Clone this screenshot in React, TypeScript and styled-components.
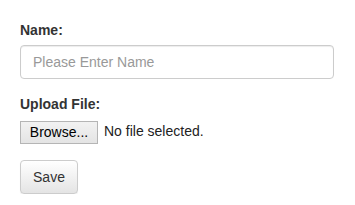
import React from 'react';
import styled, { createGlobalStyle } from 'styled-components';

const GlobalStyle = createGlobalStyle`
  html, body {
    margin: 0;
    padding: 0;
    background: #fff;
  }
  body {
    font-family: "Liberation Sans", Arial, sans-serif;
    font-size: 14px;
    line-height: 1.42857;
    color: #333;
  }
  * {
    box-sizing: border-box;
  }
`

const Form = styled.form`
  padding: 20px 21px 0 20px;
  display: flex;
  flex-direction: column;
`

const FormGroup = styled.div`
  display: flex;
  flex-direction: column;
  align-items: flex-start;
  margin-bottom: 15px;
`

const Label = styled.label`
  font-weight: 700;
  font-size: 14px;
  line-height: 20px;
  margin-bottom: 5px;
`

const TextInput = styled.input`
  width: 100%;
  height: 34px;
  padding: 6px 12px;
  font-family: inherit;
  font-size: 14px;
  color: #555;
  background: #fff;
  border: 1px solid #ccc;
  border-radius: 4px;
  box-shadow: inset 0 1px 1px rgba(0, 0, 0, 0.075);
  outline: none;

  &::placeholder {
    color: #999;
  }
`

const FileRow = styled.div`
  display: flex;
  align-items: center;
  gap: 6px;
  height: 24px;
  margin-top: 1px;
`

const BrowseButton = styled.button`
  height: 23px;
  width: 78px;
  padding: 0 8px;
  font-family: inherit;
  font-size: 14px;
  color: #000;
  background: linear-gradient(to bottom, #f2f2f2, #e4e4e4);
  border: 1px solid #b5b5b5;
  border-radius: 0;
  line-height: 20px;
`

const FileStatus = styled.span`
  font-size: 14px;
  color: #222;
`

const SaveButton = styled.button`
  align-self: flex-start;
  height: 34px;
  width: 58px;
  padding: 6px 12px;
  margin-top: 1px;
  font-family: inherit;
  font-size: 14px;
  line-height: 20px;
  color: #333;
  background: linear-gradient(to bottom, #fff 0, #e4e4e4 100%);
  border: 1px solid #ccc;
  border-radius: 4px;
  box-shadow: inset 0 1px 0 rgba(255, 255, 255, 0.15), 0 1px 1px rgba(0, 0, 0, 0.075);
`

export default function App() {
  return (
    <>
      <GlobalStyle />
      <Form onSubmit={(e) => e.preventDefault()}>
        <FormGroup>
          <Label htmlFor="name">Name:</Label>
          <TextInput id="name" type="text" placeholder="Please Enter Name" />
        </FormGroup>
        <FormGroup>
          <Label>Upload File:</Label>
          <FileRow>
            <BrowseButton type="button">Browse...</BrowseButton>
            <FileStatus>No file selected.</FileStatus>
          </FileRow>
        </FormGroup>
        <SaveButton type="submit">Save</SaveButton>
      </Form>
    </>
  )
}
